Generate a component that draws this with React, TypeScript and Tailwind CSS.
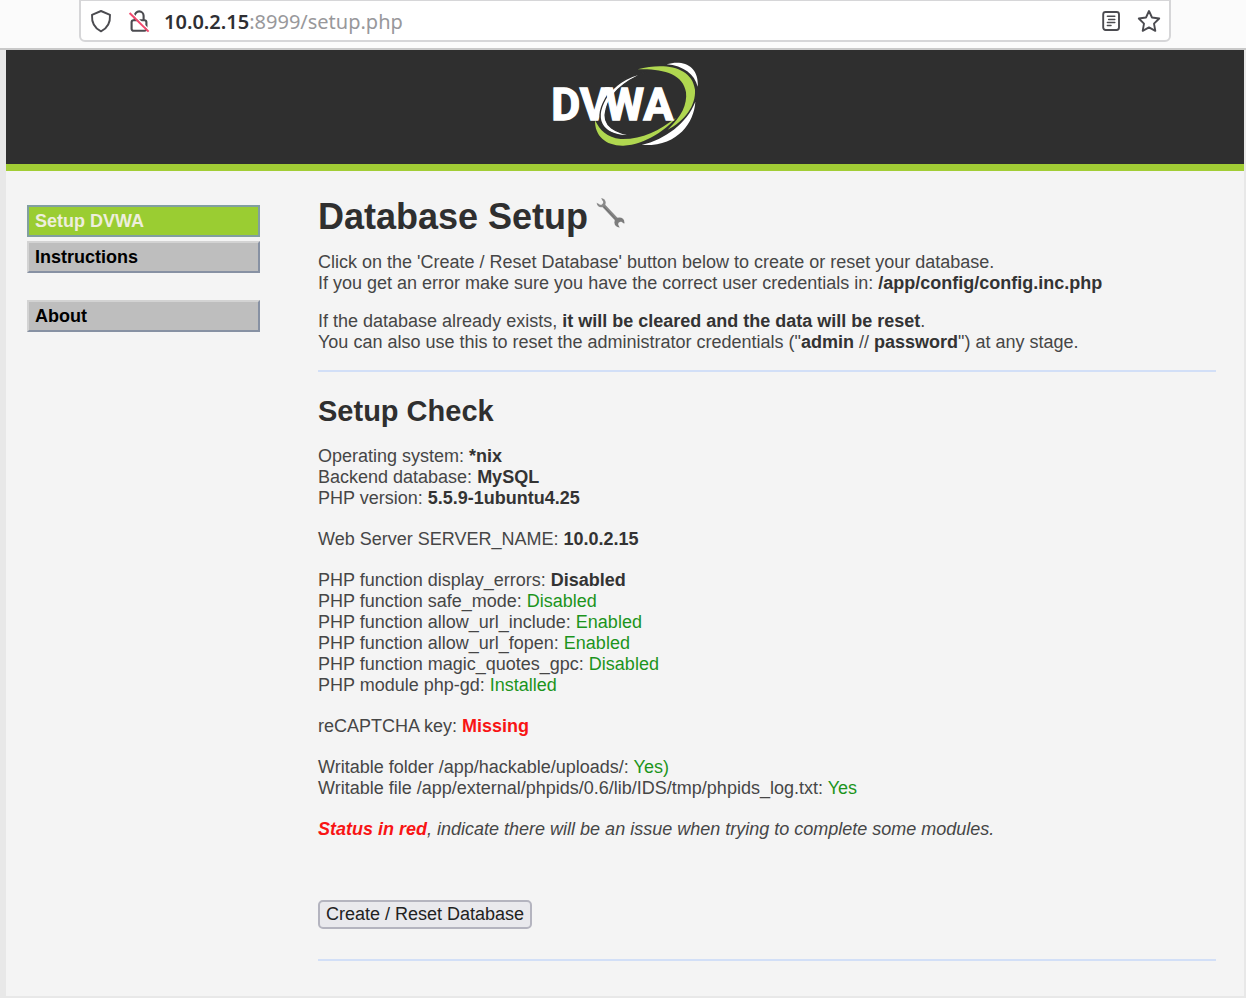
import React from "react";

function ShieldIcon() {
  return (
    <svg viewBox="0 0 22 24" className="h-6 w-[22px]" fill="none" stroke="#4b4b50" strokeWidth="1.9" strokeLinejoin="round" aria-hidden="true">
      <path d="M11 2 L20 5.8 C20.4 13 17.5 19.3 11 22.3 C4.5 19.3 1.6 13 2 5.8 Z" />
    </svg>
  );
}

function InsecureLockIcon() {
  return (
    <svg viewBox="0 0 22 24" className="h-6 w-[22px]" fill="none" aria-hidden="true">
      <rect x="3.6" y="11.2" width="14.8" height="10.6" rx="2" stroke="#4b4b50" strokeWidth="2.1" />
      <path d="M6.8 11 V6.8 A4.4 4.4 0 0 1 15.6 6.8 V11" stroke="#4b4b50" strokeWidth="2.1" />
      <path d="M2.9 3.1 L21.4 21.2" stroke="#fff" strokeWidth="1.6" />
      <path d="M1.6 4 L20.6 22.6" stroke="#f2486d" strokeWidth="2" />
    </svg>
  );
}

function ReaderIcon() {
  return (
    <svg viewBox="0 0 20 22" className="h-[22px] w-5" fill="none" stroke="#4b4b50" strokeLinecap="round" aria-hidden="true">
      <rect x="2.2" y="2" width="15.8" height="18" rx="2.4" strokeWidth="1.9" />
      <path d="M6.4 6.3 H13.8 M7.6 9.5 H13.8 M6.4 12.5 H13.8 M6.4 15.5 H10" strokeWidth="1.5" />
    </svg>
  );
}

function StarIcon() {
  return (
    <svg viewBox="0 0 24 24" className="h-6 w-6" fill="none" stroke="#4b4b50" strokeWidth="1.9" strokeLinejoin="round" aria-hidden="true">
      <path d="M12 2 L15 8.5 L22.2 9.5 L17 14.6 L18.3 21.8 L12 18.4 L5.7 21.8 L7 14.6 L1.8 9.5 L9 8.5 Z" />
    </svg>
  );
}

function WrenchIcon() {
  return (
    <svg viewBox="0 0 30 34" className="h-[34px] w-[30px]" fill="none" aria-hidden="true">
      <path d="M6 8 L22.5 25.5" stroke="#868686" strokeWidth="3.6" />
      <path d="M7 9.8 L22 25.7" stroke="#6c6c6c" strokeWidth="1" />
      <circle cx="5.2" cy="6.8" r="4.5" fill="#8a8a8a" />
      <circle cx="23.4" cy="26.4" r="5" fill="#7c7c7c" />
      <path d="M-1 1 L4 0 L6.4 4.6 A2.4 2.4 0 0 1 3 8 L-1 6 Z" fill="#f4f4f4" />
      <path d="M30 29 L25.4 25.8 A2.6 2.6 0 0 0 22.2 28.8 L25 34 L30 34 Z" fill="#f4f4f4" />
    </svg>
  );
}

function Logo() {
  return (
    <svg viewBox="30 15 450 270" className="h-[90px] w-[150px]" role="img" aria-label="DVWA">
      <path fill="#fff" d="M380 28 C432 12 478 36 473 95 C464 58 430 32 380 28 Z" />
      <path fill="#fff" d="M466 140 C462 206 410 276 305 270 C376 252 440 206 466 140 Z" />
      <path fill="#b0d750" d="M293 43 C372 22 456 34 465 104 C468 152 434 198 383 224 C425 186 442 148 438 112 C430 56 366 40 293 43 Z" />
      <path fill="#b0d750" d="M165 196 C164 244 198 273 250 272 C318 268 380 222 408 188 C356 228 304 254 242 252 C200 248 180 226 165 196 Z" />
      <text x="34" y="194" fill="#fff" stroke="#fff" strokeWidth="4" className="font-[Roboto,sans-serif] text-[134px] font-bold">DV</text>
      <path fill="#fff" stroke="#2f2f2f" strokeWidth="4" d="M318 51 C262 64 220 88 196 132 C158 200 190 248 288 242 C226 236 184 212 198 164 C208 118 250 80 318 51 Z" />
      <text x="195" y="194" fill="#fff" stroke="#fff" strokeWidth="4" className="font-[Roboto,sans-serif] text-[134px] font-bold">WA</text>
    </svg>
  );
}

function NavItem({ label, active = false }: { label: string; active?: boolean }) {
  return (
    <a
      href="#"
      aria-current={active ? "page" : undefined}
      className={
        active
          ? "block border-2 border-[#819fa0] bg-[#9acd32] px-1.5 py-1 leading-5 font-bold text-[#eeeedd]"
          : "block border-2 border-t-[#d3d3d3] border-r-[#8791a3] border-b-[#8791a3] border-l-[#d3d3d3] bg-[#bebebe] px-1.5 py-1 leading-5 font-bold text-black"
      }
    >
      {label}
    </a>
  );
}

const functions = [
  ["PHP function safe_mode:", "Disabled"],
  ["PHP function allow_url_include:", "Enabled"],
  ["PHP function allow_url_fopen:", "Enabled"],
  ["PHP function magic_quotes_gpc:", "Disabled"],
  ["PHP module php-gd:", "Installed"],
];

export default function App() {
  return (
    <div className="flex min-h-screen flex-col bg-[#e8e8e8] font-['Liberation_Sans',Arial,sans-serif] text-lg text-[#464646]">
      <div className="border-b-2 border-[#c9c9c9] bg-[#fbfbfb] pr-[75px] pb-1.5 pl-[79px]">
        <div className="flex h-[42px] items-center rounded-b-md border-2 border-t border-[#d6d6d8] bg-white pr-2 pl-[9px]">
          <ShieldIcon />
          <div className="ml-4"><InsecureLockIcon /></div>
          <div className="ml-3.5 flex-1 pt-0.5 font-['Noto_Sans',sans-serif] text-xl text-[#98989b]">
            <span className="font-semibold text-[#2f2f33]">10.0.2.15</span>:8999/setup.php
          </div>
          <button type="button" aria-label="Toggle reader view"><ReaderIcon /></button>
          <button type="button" aria-label="Bookmark this page" className="ml-4"><StarIcon /></button>
        </div>
      </div>

      <div className="mr-0.5 mb-0.5 ml-1.5 flex flex-1 flex-col bg-[#f4f4f4]">
        <header className="flex justify-center border-b-[7px] border-[#a2cd35] bg-[#2f2f2f] pt-2.5 pb-3.5">
          <Logo />
        </header>

        <div className="flex flex-1 pr-7 pl-[21px]">
          <nav className="mt-[34px] w-[233px] shrink-0">
            <div className="flex flex-col gap-1">
              <NavItem label="Setup DVWA" active />
              <NavItem label="Instructions" />
            </div>
            <div className="mt-[27px]">
              <NavItem label="About" />
            </div>
          </nav>

          <main className="ml-[58px] min-w-0 flex-1 pt-[25px] leading-[21px]">
            <h1 className="flex items-start gap-2 text-4xl leading-[42px] font-bold text-[#2f2f2f]">
              Database Setup <WrenchIcon />
            </h1>

            <p className="mt-3.5">
              Click on the 'Create / Reset Database' button below to create or reset your database.
              <br />
              If you get an error make sure you have the correct user credentials in: <b className="text-[#333]">/app/config/config.inc.php</b>
            </p>
            <p className="mt-[17px]">
              If the database already exists, <b className="text-[#333]">it will be cleared and the data will be reset</b>.
              <br />
              You can also use this to reset the administrator credentials ("<b className="text-[#333]">admin</b> // <b className="text-[#333]">password</b>") at any stage.
            </p>

            <hr className="mt-[17px] border-t-2 border-[#d2dff7]" />

            <h2 className="mt-[22px] text-[29px] leading-[34px] font-bold text-[#2f2f2f]">Setup Check</h2>

            <div className="mt-[18px] flex flex-col gap-5">
              <p>
                Operating system: <b className="text-[#333]">*nix</b>
                <br />
                Backend database: <b className="text-[#333]">MySQL</b>
                <br />
                PHP version: <b className="text-[#333]">5.5.9-1ubuntu4.25</b>
              </p>
              <p>
                Web Server SERVER_NAME: <b className="text-[#333]">10.0.2.15</b>
              </p>
              <div>
                <p>
                  PHP function display_errors: <b className="text-[#333]">Disabled</b>
                </p>
                {functions.map(([name, state]) => (
                  <p key={name}>
                    {name} <span className="text-[#1c941c]">{state}</span>
                  </p>
                ))}
              </div>
              <p>
                reCAPTCHA key: <b className="text-[#f81414]">Missing</b>
              </p>
              <p>
                Writable folder /app/hackable/uploads/: <span className="text-[#1c941c]">Yes)</span>
                <br />
                Writable file /app/external/phpids/0.6/lib/IDS/tmp/phpids_log.txt: <span className="text-[#1c941c]">Yes</span>
              </p>
              <p className="italic">
                <b className="text-[#f81414]">Status in red</b>, indicate there will be an issue when trying to complete some modules.
              </p>
            </div>

            <button type="button" className="mt-[60px] block rounded-[5px] border-2 border-[#b4b4bf] bg-[#e9e9ed] px-1.5 py-0.5 text-[#222]">
              Create / Reset Database
            </button>

            <hr className="mt-[30px] border-t-2 border-[#d2dff7]" />
          </main>
        </div>
      </div>
    </div>
  );
}
